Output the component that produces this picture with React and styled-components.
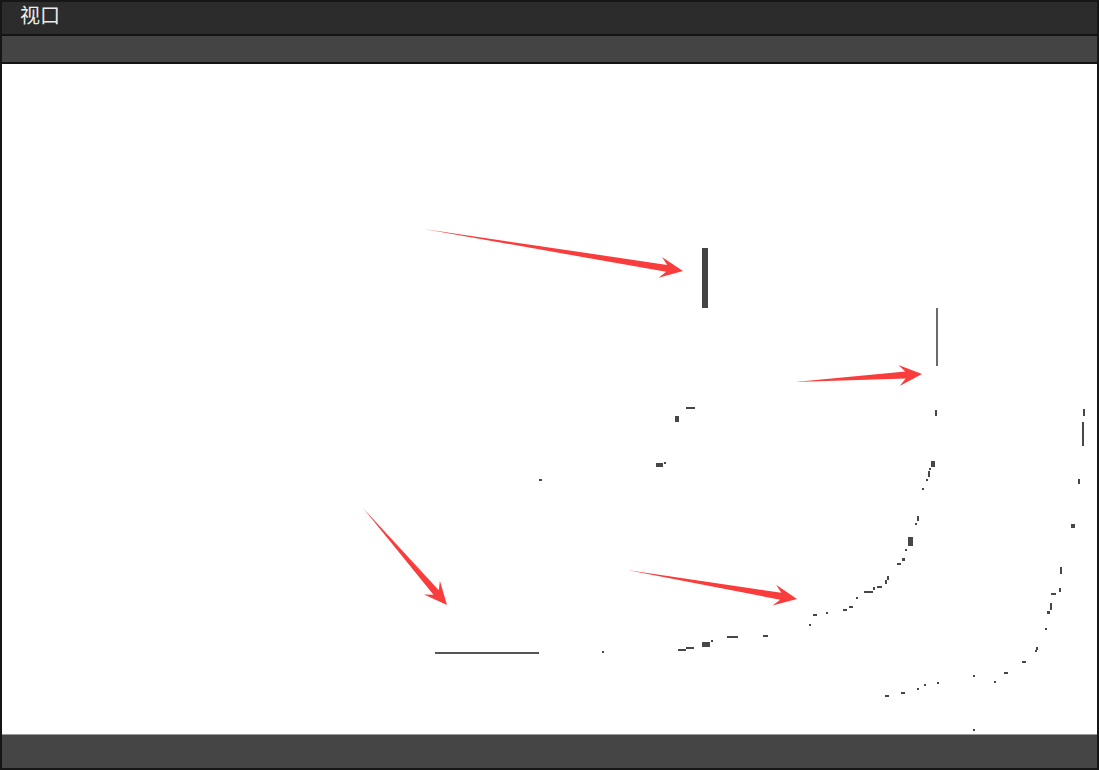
import styled, { createGlobalStyle } from 'styled-components'

const GlobalStyle = createGlobalStyle`
	html, body {
		margin: 0;
		padding: 0;
		background: #111;
	}
	* {
		box-sizing: border-box;
	}
`

// marks left on the canvas, in page pixels
const marks = [
	[702, 248, 6, 60, '#444'],
	[936, 308, 2, 58, '#6a6a6a'],
	[435, 652, 104, 2, '#555'],
	[602, 651, 2, 2],
	[686, 407, 9, 2],
	[675, 416, 4, 6],
	[656, 463, 7, 4],
	[664, 462, 2, 2],
	[539, 479, 3, 2],
	[678, 649, 8, 2],
	[686, 647, 8, 2],
	[702, 642, 8, 5],
	[711, 640, 2, 2],
	[727, 636, 11, 2],
	[763, 635, 5, 2],
	[809, 624, 2, 2],
	[813, 614, 4, 2],
	[826, 612, 2, 2],
	[843, 609, 4, 2],
	[849, 606, 4, 2],
	[856, 597, 2, 2],
	[864, 591, 9, 2],
	[873, 587, 2, 3],
	[877, 586, 5, 2],
	[885, 580, 2, 4],
	[887, 576, 2, 4],
	[897, 563, 4, 2],
	[902, 558, 3, 3],
	[905, 549, 2, 2],
	[908, 537, 5, 9],
	[915, 523, 2, 2],
	[917, 516, 2, 5],
	[922, 488, 2, 2],
	[926, 479, 2, 2],
	[928, 471, 2, 6],
	[929, 468, 2, 2],
	[931, 461, 4, 6],
	[935, 410, 2, 6],
	[1083, 409, 2, 7],
	[1082, 422, 2, 24],
	[1078, 479, 2, 5],
	[1071, 524, 4, 4],
	[1060, 567, 2, 7],
	[1059, 588, 2, 4],
	[1051, 593, 5, 2],
	[1050, 603, 2, 7],
	[1047, 611, 3, 3],
	[1045, 628, 2, 2],
	[1036, 647, 2, 3],
	[1035, 650, 2, 2],
	[1022, 661, 4, 2],
	[1004, 672, 4, 2],
	[994, 681, 2, 2],
	[973, 675, 2, 2],
	[937, 682, 2, 2],
	[924, 684, 2, 2],
	[917, 688, 2, 2],
	[901, 692, 4, 2],
	[885, 695, 4, 2],
	[973, 729, 2, 2],
]

const arrows = [
	[424, 229, 683, 271],
	[795, 382, 922, 374],
	[363, 508, 447, 605],
	[627, 570, 797, 599],
]

function arrowPoints(x1, y1, x2, y2, L = 23, W = 10.5, w = 3.5) {
	const len = Math.hypot(x2 - x1, y2 - y1)
	const ux = (x2 - x1) / len
	const uy = (y2 - y1) / len
	const nx = -uy
	const ny = ux
	const nk = [x2 - ux * L * 0.72, y2 - uy * L * 0.72]
	const wg = [x2 - ux * L, y2 - uy * L]
	const pts = [
		[x1, y1],
		[nk[0] + nx * w, nk[1] + ny * w],
		[wg[0] + nx * W, wg[1] + ny * W],
		[x2, y2],
		[wg[0] - nx * W, wg[1] - ny * W],
		[nk[0] - nx * w, nk[1] - ny * w],
	]
	return pts.map((p) => p.map((v) => v.toFixed(1)).join(',')).join(' ')
}

export default function App() {
	return (
		<>
			<GlobalStyle />
			<Window>
				<TitleBar>
					<Title>视口</Title>
				</TitleBar>
				<Toolbar />
				<Viewport>
					<Canvas viewBox='2 64 1095 670' preserveAspectRatio='none'>
						{marks.map(([x, y, w, h, c], i) => (
							<rect key={i} x={x} y={y} width={w} height={h} fill={c || '#474747'} />
						))}
						{arrows.map((a, i) => (
							<polygon key={i} points={arrowPoints(...a)} fill='#f93d3d' />
						))}
					</Canvas>
				</Viewport>
				<StatusBar />
			</Window>
		</>
	)
}

const Window = styled.div`
	display: flex;
	flex-direction: column;
	width: 1099px;
	height: 770px;
	background: #2b2b2b;
	border: 2px solid #161616;
`

const TitleBar = styled.header`
	display: flex;
	align-items: center;
	flex-shrink: 0;
	height: 34px;
	padding-left: 18px;
	background: #2c2c2c;
	border-bottom: 2px solid #141414;
`

const Title = styled.span`
	font-family: 'Noto Sans CJK SC', 'DejaVu Sans', sans-serif;
	font-size: 20px;
	line-height: 1;
	margin-top: -7px;
	color: #ececec;
`

const Toolbar = styled.div`
	flex-shrink: 0;
	height: 28px;
	background: #444;
	border-bottom: 2px solid #141414;
`

const Viewport = styled.main`
	flex: 1;
	background: #fff;
	border-bottom: 1px solid #9a9a9a;
	overflow: hidden;
`

const Canvas = styled.svg`
	display: block;
	width: 100%;
	height: 100%;
`

const StatusBar = styled.footer`
	flex-shrink: 0;
	height: 33px;
	background: #454545;
`
